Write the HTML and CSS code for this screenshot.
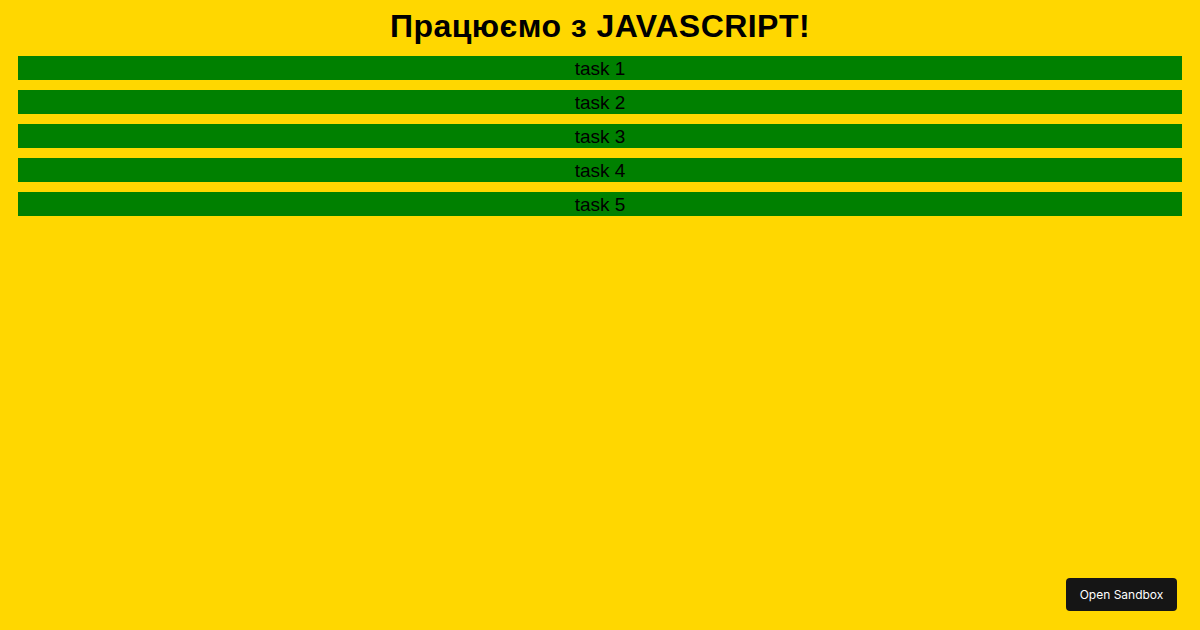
FILE: index.html
```html
<!DOCTYPE html>
<html lang="uk">
<head>
<meta charset="utf-8">
<title>Працюємо з JAVASCRIPT!</title>
<link rel="stylesheet" href="styles.css">
</head>
<body>
<main class="page">
  <h1 class="title">Працюємо з JAVASCRIPT!</h1>
  <ul class="tasks">
    <li class="task">task 1</li>
    <li class="task">task 2</li>
    <li class="task">task 3</li>
    <li class="task">task 4</li>
    <li class="task">task 5</li>
  </ul>
</main>
<a class="sandbox-btn" href="#">Open Sandbox</a>
</body>
</html>
```

FILE: styles.css
```css
html, body {
  margin: 0;
  padding: 0;
  height: 100%;
}
body {
  background: #ffd700;
  font-family: "Liberation Sans", Arial, sans-serif;
  color: #000;
}
.page {
  padding: 8px 18px;
  display: flex;
  flex-direction: column;
}
.title {
  margin: 0 0 11px;
  font-size: 32px;
  line-height: 37px;
  font-weight: bold;
  letter-spacing: 0.45px;
  text-align: center;
}
.tasks {
  list-style: none;
  margin: 0;
  padding: 0;
  display: flex;
  flex-direction: column;
  gap: 10px;
}
.task {
  background: #008000;
  height: 24px;
  box-sizing: border-box;
  padding-top: 1px;
  line-height: 23px;
  font-size: 19px;
  text-align: center;
}
.sandbox-btn {
  position: fixed;
  right: 23px;
  bottom: 19px;
  width: 111px;
  height: 33px;
  box-sizing: border-box;
  display: flex;
  align-items: center;
  justify-content: center;
  background: #151515;
  color: #fff;
  border-radius: 4px;
  font-family: Inter, "Liberation Sans", sans-serif;
  font-size: 12px;
  text-decoration: none;
}
```
